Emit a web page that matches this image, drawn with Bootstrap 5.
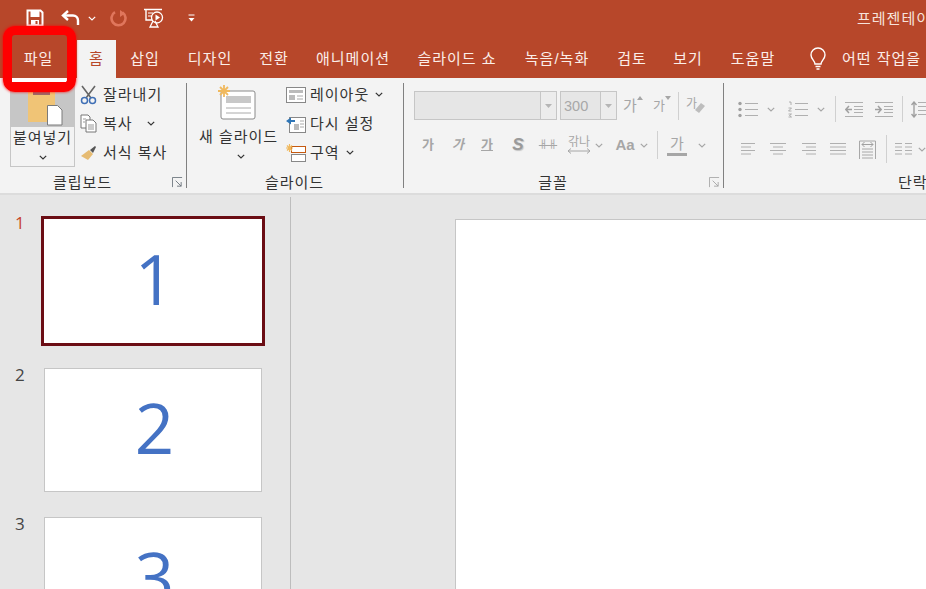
<!DOCTYPE html>
<html lang="ko">
<head>
  <meta charset="UTF-8">
  <meta name="viewport" content="width=device-width, initial-scale=1.0">
  <title>프레젠테이션 - PowerPoint</title>
  <link href="https://cdn.jsdelivr.net/npm/bootstrap@5.3.2/dist/css/bootstrap.min.css" rel="stylesheet">
  <script src="https://cdn.jsdelivr.net/npm/bootstrap@5.3.2/dist/js/bootstrap.bundle.min.js"></script>
  <style>
    html, body { height: 100%; }
    body {
      width: 926px; height: 589px; overflow: hidden; background: #e6e6e6;
      font-family: "Liberation Sans", "Noto Sans CJK KR", sans-serif;
      font-size: 15px; letter-spacing: 1px; line-height: 20px; color: #444;
    }
    svg { display: block; flex: none; }
    .titlebar { height: 40px; background: #b7472a; color: #fff; padding-bottom: 4px; }
    .qat { padding-left: 26px; }
    .doc-title { margin-left: auto; width: 69px; padding-top: 2px; white-space: nowrap; overflow: hidden; color: #f6e3dc; }
    .doc-title span { display: block; }
    .tabs { height: 38px; background: #b7472a; color: #fbeee9; white-space: nowrap; overflow: hidden; }
    .tab { height: 38px; line-height: 38px; text-align: center; flex: none; }
    .tab.active { background: #f3f3f3; color: #b7472a; }
    .tell { color: #fbeee9; }

    .ribbon { height: 117px; background: #f3f3f3; border-bottom: 2px solid #dcdcdc; overflow: hidden; }
    .grp { height: 115px; flex: none; position: relative; }
    .grp + .grp::before { content: ""; position: absolute; left: 0; top: 5px; height: 105px; width: 1px; background: #808080; }
    .grp-body { height: 95px; }
    .grp-label { height: 20px; text-align: center; color: #333; white-space: nowrap; }
    .launcher { position: absolute; bottom: 5px; }
    .g-clip { width: 186px; }
    .g-slide { width: 217px; }
    .g-font { width: 320px; }
    .g-para { width: 203px; }

    .paste { width: 65px; margin: 4px 0 0 10px; height: 85px; }
    .paste-top { height: 45px; background: #c6c6c6; overflow: hidden; }
    .paste-bot { height: 40px; border: 1px solid #c6c6c6; border-top: 0; text-align: center; color: #333; line-height: 20px; padding-top: 1px; white-space: nowrap; }
    .rows { padding-top: 2px; }
    .row-item { height: 29px; color: #333; white-space: nowrap; }
    .new-slide { width: 84px; margin-left: 9px; color: #333; white-space: nowrap; }

    .combo { height: 29px; border: 1px solid #c6c6c6; background: #e6e6e6; color: #a8a8a8; letter-spacing: 0; }
    .combo-arrow { width: 16px; height: 27px; background: #ececec; border-left: 1px solid #c6c6c6; margin-left: auto; }
    .off { color: #a6a6a6; font-weight: 700; font-size: 13px; letter-spacing: 0; }
    .off-sep { width: 1px; height: 28px; background: #d0d0d0; flex: none; }
    .tool { flex: none; text-align: center; }

    .panel { width: 291px; border-right: 1px solid #bdbdbd; margin-top: 2px; flex: none; }
    .slide-no { width: 41px; padding-left: 15px; flex: none; font: 17px/20px "Open Sans", sans-serif; letter-spacing: 0; margin-top: -3px; height: 20px; }
    .thumb {
      background: #fff; border: 1px solid #c6c6c6; color: #4472c4;
      font-family: "Open Sans", "Noto Sans", sans-serif; font-weight: 400; font-size: 69px; line-height: 1; letter-spacing: 0;
      width: 218px; height: 124px; margin-left: 3px; flex: none; padding: 0 0 5px 3px;
    }
    .thumb.sel { width: 224px; height: 130px; margin-left: 0; border: 3px solid #6b0d14; }
    .stage { background: #fff; border: 1px solid #c6c6c6; border-right: 0; border-bottom: 0; margin: 24px 0 0 164px; }
    .workspace { height: 394px; overflow: hidden; }

    .callout {
      position: absolute; left: 3px; top: 26px; width: 73px; height: 66px;
      border: 9.5px solid #fe0000; border-bottom-width: 10.5px; border-radius: 12px; box-shadow: 0 0 3px #fe0000;
    }
    .file-line { position: absolute; left: 12px; top: 78px; width: 54px; height: 4px; background: #fff; }
  </style>
</head>
<body class="position-relative">

  <svg width="0" height="0" class="position-absolute">
    <symbol id="chev" viewBox="0 0 8 5"><path d="M.8.8 4 4 7.200.8" fill="none" stroke="currentColor" stroke-width="1.200"/></symbol>
    <symbol id="launch" viewBox="0 0 12 12"><path d="M.5 11V.5H11M4 4l6 6M10 5.500V10H5.500" fill="none" stroke="currentColor"/></symbol>
  </svg>

  <!-- 제목 표시줄 -->
  <div class="titlebar d-flex align-items-center">
    <div class="qat d-flex align-items-center">
      <svg width="18" height="18" viewBox="0 0 18 18"><path d="M1.500 1.500h13l2 2v13h-15z" fill="none" stroke="#fff" stroke-width="2"/><rect x="4.500" y="2" width="9" height="6" fill="#fff"/><rect x="5" y="11" width="8" height="5" fill="#fff"/><rect x="9.500" y="12" width="2" height="3" fill="#b7472a"/></svg>
      <svg width="19" height="16" viewBox="0 0 19 16" style="margin-left:17px"><path d="M7 1 2 5.500 7 10" fill="none" stroke="#fff" stroke-width="2.400"/><path d="M3 5.500h9a5 5 0 0 1 5 5V15" fill="none" stroke="#fff" stroke-width="2.400"/></svg>
      <svg width="8" height="5" class="text-white" style="margin-left:8px"><use href="#chev"/></svg>
      <svg width="18" height="18" viewBox="0 0 18 18" style="margin-left:14px"><path d="M12.500 3.500A7 7 0 1 1 5 3.200" fill="none" stroke="#e0765c" stroke-width="2.600"/><path d="M10 1v7l5-3.500z" fill="#e0765c"/></svg>
      <svg width="20" height="20" viewBox="0 0 20 20" style="margin-left:16px"><path d="M0 1.500h18M2 1.500V12h6" fill="none" stroke="#fff" stroke-width="1.400"/><circle cx="13" cy="9.500" r="5.500" fill="none" stroke="#fff" stroke-width="1.300"/><path d="M11.500 6.500 16 9.500 11.500 12.500z" fill="#fff"/><path d="M4 5h5M4 8h4" stroke="#fff"/><path d="m9 13-3 6h8l-3-6" fill="none" stroke="#fff" stroke-width="1.300"/></svg>
      <svg width="7" height="8" viewBox="0 0 7 8" style="margin-left:24px"><path d="M.5 1h6" stroke="#fff"/><path d="M.5 4h6L3.500 7.500z" fill="#fff"/></svg>
    </div>
    <div class="doc-title"><span>프레젠테이션</span></div>
  </div>

  <!-- 탭 -->
  <div class="tabs d-flex">
    <div class="tab" style="width:77px">파일</div>
    <div class="tab active" style="width:39px">홈</div>
    <div class="tab" style="width:58px">삽입</div>
    <div class="tab" style="width:72px">디자인</div>
    <div class="tab" style="width:56px">전환</div>
    <div class="tab" style="width:102px">애니메이션</div>
    <div class="tab" style="width:106px">슬라이드 쇼</div>
    <div class="tab" style="width:94px">녹음/녹화</div>
    <div class="tab" style="width:56px">검토</div>
    <div class="tab" style="width:56px">보기</div>
    <div class="tab" style="width:74px">도움말</div>
    <div class="d-flex align-items-center tell" style="margin-left:20px">
      <svg width="16" height="24" viewBox="0 0 16 24"><path d="M5 17c0-3-4-5-4-9a7 7 0 0 1 14 0c0 4-4 6-4 9z" fill="none" stroke="#fff" stroke-width="1.400"/><path d="M5.500 19.500h5M6.500 22h3" stroke="#fff" stroke-width="1.500"/></svg>
      <span style="margin-left:16px">어떤 작업을 원하시나요?</span>
    </div>
  </div>

  <!-- 리본 -->
  <div class="ribbon d-flex">
    <div class="grp g-clip">
      <div class="grp-body d-flex">
        <div class="paste">
          <div class="paste-top">
            <svg width="65" height="45" viewBox="0 0 65 45"><rect x="18" y="10" width="27" height="30" fill="#f0c476"/><rect x="23" y="8" width="17" height="5" fill="#9b6a6a"/><path d="M37.500 23.500h10l4.500 4.500v15H37.500z" fill="#fff" stroke="#7a7a7a"/></svg>
          </div>
          <div class="paste-bot">붙여넣기
            <svg width="8" height="5" class="mx-auto" style="margin-top:7px"><use href="#chev"/></svg>
          </div>
        </div>
        <div class="rows" style="margin-left:5px">
          <div class="row-item d-flex align-items-center" style="gap:6px">
            <svg width="17" height="20" viewBox="0 0 17 20"><path d="M2 1l9 12M15 1 6 13" stroke="#666" stroke-width="1.600"/><circle cx="4.500" cy="15.500" r="3" fill="none" stroke="#3f6fb5" stroke-width="1.500"/><circle cx="12.500" cy="15.500" r="3" fill="none" stroke="#3f6fb5" stroke-width="1.500"/></svg>
            <span>잘라내기</span>
          </div>
          <div class="row-item d-flex align-items-center" style="gap:6px">
            <svg width="17" height="19" viewBox="0 0 17 19"><path d="M1 1h7l2 2v11H1z" fill="#fff" stroke="#777"/><path d="M6 6h7l3 3v9H6z" fill="#fff" stroke="#777"/><path d="M8 11h6M8 13h6M8 15h6M3 5h3M3 8h2" stroke="#999"/></svg>
            <span>복사</span>
            <svg width="8" height="5" style="margin-left:8px"><use href="#chev"/></svg>
          </div>
          <div class="row-item d-flex align-items-center" style="gap:6px">
            <svg width="17" height="16" viewBox="0 0 17 16"><path d="M1 11 9 5l4 4-5 6z" fill="#e6bb72"/><path d="m10 5 5-4 1 1-3 6z" fill="#555"/></svg>
            <span>서식 복사</span>
          </div>
        </div>
      </div>
      <div class="grp-label" style="padding-right:21px">클립보드</div>
      <svg class="launcher text-secondary" width="11" height="11" style="left:172px"><use href="#launch"/></svg>
    </div>

    <div class="grp g-slide">
      <div class="grp-body d-flex">
        <div class="new-slide">
          <svg width="38" height="36" viewBox="0 0 38 36" style="margin:7px 0 0 23px">
            <rect x="3" y="6" width="34" height="28" rx="2" fill="#fff" stroke="#8a8a8a"/>
            <rect x="8" y="11" width="25" height="7" fill="#c8c8c8"/>
            <path d="M8 23h25M8 28h25" stroke="#aaa"/>
            <path d="M6 0v12M0 6h12M2 2l8 8M10 2l-8 8" stroke="#f0b95e" stroke-width="1.800"/>
          </svg>
          <div style="margin:6px 0 0 4px">새 슬라이드</div>
          <svg width="8" height="5" style="margin:7px 0 0 42px"><use href="#chev"/></svg>
        </div>
        <div class="rows" style="margin-left:7px">
          <div class="row-item d-flex align-items-center">
            <svg width="20" height="16" viewBox="0 0 20 16"><rect x=".5" y=".5" width="19" height="15" fill="#fff" stroke="#888"/><rect x="3" y="3" width="14" height="3" fill="#bbb"/><rect x="3" y="8" width="6" height="5" fill="#bbb"/><path d="M11 9h6M11 12h6" stroke="#aaa"/></svg>
            <span style="margin-left:4px">레이아웃</span>
            <svg width="8" height="5" style="margin-left:6px"><use href="#chev"/></svg>
          </div>
          <div class="row-item d-flex align-items-center">
            <svg width="20" height="18" viewBox="0 0 20 18"><rect x="3.500" y="2.500" width="16" height="15" fill="#fff" stroke="#888"/><rect x="8" y="9" width="5" height="6" fill="#bbb"/><path d="M14 6h4M14 9h4M14 12h4" stroke="#aaa"/><path d="M9 5H5V2.500L0 6l5 3.500V7h4z" fill="#2e75b6"/></svg>
            <span style="margin-left:4px">다시 설정</span>
          </div>
          <div class="row-item d-flex align-items-center">
            <svg width="20" height="18" viewBox="0 0 20 18"><rect x="5.500" y="2.500" width="14" height="6" fill="#fff" stroke="#c55a11"/><rect x="5.500" y="10.500" width="14" height="7" fill="#fff" stroke="#888"/><path d="M3.500 0v8M0 4h7M1 1.500l5 5M6 1.500l-5 5" stroke="#f0b95e" stroke-width="1.200"/></svg>
            <span style="margin-left:4px">구역</span>
            <svg width="8" height="5" style="margin-left:6px"><use href="#chev"/></svg>
          </div>
        </div>
      </div>
      <div class="grp-label">슬라이드</div>
    </div>

    <div class="grp g-font">
      <div class="grp-body">
        <div class="d-flex align-items-center off" style="padding:13px 0 0 11px;font-weight:400">
          <div class="combo d-flex" style="width:143px"><div class="combo-arrow d-flex align-items-center justify-content-center"><svg width="7" height="4" viewBox="0 0 7 4"><path d="M0 0h7L3.500 4z" fill="#b5b5b5"/></svg></div></div>
          <div class="combo d-flex align-items-center" style="width:57px;margin-left:3px;padding-left:3px;font-size:14.5px">300<div class="combo-arrow d-flex align-items-center justify-content-center"><svg width="7" height="4" viewBox="0 0 7 4"><path d="M0 0h7L3.500 4z" fill="#b5b5b5"/></svg></div></div>
          <div class="tool d-flex align-items-start" style="width:20px;margin-left:6px;font-size:15px">가<svg width="6" height="4" viewBox="0 0 6 4"><path d="M0 4 3 0l3 4z" fill="#a6a6a6"/></svg></div>
          <div class="tool d-flex align-items-start" style="width:18px;margin-left:10px;font-size:13px">가<svg width="6" height="4" viewBox="0 0 6 4"><path d="M0 0h6L3 4z" fill="#a6a6a6"/></svg></div>
          <div class="off-sep" style="margin-left:7px"></div>
          <div class="tool d-flex" style="width:22px;margin-left:7px;font-size:12px;line-height:14px">가<svg width="12" height="12" viewBox="0 0 12 12" style="margin:5px 0 0 -3px"><path d="m1 8 6-7 4 3-6 7z" fill="#bdbdbd"/></svg></div>
        </div>
        <div class="d-flex align-items-center off" style="padding:11px 0 0 17px">
          <div class="tool" style="width:16px">가</div>
          <div class="tool fst-italic" style="width:16px;margin-left:14px">가</div>
          <div class="tool text-decoration-underline" style="width:16px;margin-left:13px">가</div>
          <div class="tool fst-italic" style="width:18px;margin-left:14px;font-size:17px;color:#9a9a9a;text-shadow:1px 1px 1px #c4c4c4">S</div>
          <div class="tool text-decoration-line-through fw-normal" style="width:22px;margin-left:10px;font-size:10px">ㅐㅐ</div>
          <div class="tool fw-normal" style="width:24px;margin-left:8px;font-size:12px;line-height:12px">갂나<svg width="24" height="6" viewBox="0 0 24 6"><path d="M1 3h22M4 .5 1 3l3 2.500M20 .5 23 3l-3 2.500" fill="none" stroke="#a6a6a6"/></svg></div>
          <svg width="8" height="5" style="margin-left:4px"><use href="#chev"/></svg>
          <div class="tool" style="width:22px;margin-left:11px;font-size:15px">Aa</div>
          <svg width="8" height="5" style="margin-left:4px"><use href="#chev"/></svg>
          <div class="off-sep" style="margin-left:9px"></div>
          <div class="tool fw-normal" style="width:20px;margin-left:9px;border-bottom:3px solid #a6a6a6;font-size:15px;line-height:18px">가</div>
          <svg width="8" height="5" style="margin-left:11px"><use href="#chev"/></svg>
        </div>
      </div>
      <div class="grp-label" style="padding-right:20px">글꼴</div>
      <svg class="launcher" width="11" height="11" style="left:306px;color:#a6a6a6"><use href="#launch"/></svg>
    </div>

    <div class="grp g-para" style="color:#a6a6a6">
      <div class="grp-body">
        <div class="d-flex align-items-center" style="padding:18px 0 0 15px">
          <svg width="20" height="17" viewBox="0 0 20 17"><path d="M7 2.500h13M7 8.500h13M7 14.500h13" stroke="#b0b0b0"/><circle cx="2" cy="2.500" r="1.700" fill="#a0a0a0"/><circle cx="2" cy="8.500" r="1.700" fill="#a0a0a0"/><circle cx="2" cy="14.500" r="1.700" fill="#a0a0a0"/></svg>
          <svg width="8" height="5" style="margin-left:9px"><use href="#chev"/></svg>
          <svg width="20" height="17" viewBox="0 0 20 17" style="margin-left:13px"><path d="M7 2.500h13M7 8.500h13M7 14.500h13" stroke="#b0b0b0"/><path d="M1 1h2v3M.5 7h3l-3 3h3M.5 13h3l-2 1.500 2 1.500h-3" fill="none" stroke="#a0a0a0" stroke-width=".8"/></svg>
          <svg width="8" height="5" style="margin-left:9px"><use href="#chev"/></svg>
          <div class="off-sep" style="margin-left:10px;height:26px"></div>
          <svg width="18" height="15" viewBox="0 0 18 15" style="margin-left:9px"><path d="M0 .5h18M0 14.500h18M9 4.500h9M9 7.500h9M9 10.500h9" stroke="#b0b0b0"/><path d="M7 7.500H1M4 4 .8 7.500 4 11" fill="none" stroke="#a0a0a0" stroke-width="1.500"/></svg>
          <svg width="18" height="15" viewBox="0 0 18 15" style="margin-left:12px"><path d="M0 .5h18M0 14.500h18M9 4.500h9M9 7.500h9M9 10.500h9" stroke="#b0b0b0"/><path d="M0 7.500h6M3 4l3.200 3.500L3 11" fill="none" stroke="#a0a0a0" stroke-width="1.500"/></svg>
          <div class="off-sep" style="margin-left:9px;height:26px"></div>
          <svg width="18" height="17" viewBox="0 0 18 17" style="margin-left:8px"><path d="M7 1.500h11M7 5.500h11M7 9.500h11M7 13.500h11" stroke="#b0b0b0"/><path d="M3 1v15M.5 4 3 1l2.500 3M.5 13 3 16l2.500-3" fill="none" stroke="#a0a0a0" stroke-width="1.400"/></svg>
        </div>
        <div class="d-flex align-items-center" style="padding:13px 0 0 18px">
          <svg width="14" height="12" viewBox="0 0 14 12"><path d="M0 .5h14M0 4h10M0 7.500h14M0 11h10" stroke="#b0b0b0"/></svg>
          <svg width="16" height="12" viewBox="0 0 16 12" style="margin-left:15px"><path d="M0 .5h16M3 4h10M0 7.500h16M3 11h10" stroke="#b0b0b0"/></svg>
          <svg width="14" height="12" viewBox="0 0 14 12" style="margin-left:16px"><path d="M0 .5h14M4 4h10M0 7.500h14M4 11h10" stroke="#b0b0b0"/></svg>
          <svg width="16" height="12" viewBox="0 0 16 12" style="margin-left:14px"><path d="M0 .5h16M0 4h16M0 7.500h16M0 11h16" stroke="#b0b0b0"/></svg>
          <svg width="17" height="19" viewBox="0 0 17 19" style="margin-left:13px"><path d="M.5 19V1h16v18M3 9h11M3 12h11M3 15h11M3 18h11" fill="none" stroke="#a8a8a8"/><path d="M3 4.500h11M5.500 2 3 4.500 5.500 7M11.500 2 14 4.500 11.500 7" fill="none" stroke="#a0a0a0"/></svg>
          <div class="off-sep" style="margin-left:10px"></div>
          <svg width="17" height="12" viewBox="0 0 17 12" style="margin-left:8px"><path d="M0 .5h7M0 4h7M0 7.500h7M0 11h7M10 .5h7M10 4h7M10 7.500h7M10 11h7" stroke="#b0b0b0"/></svg>
          <svg width="8" height="5" style="margin-left:6px"><use href="#chev"/></svg>
        </div>
      </div>
      <div class="grp-label text-start" style="padding-left:175px">단락</div>
    </div>
  </div>

  <!-- 슬라이드 영역 -->
  <div class="workspace d-flex">
    <div class="panel d-flex flex-column" style="padding-top:19px">
      <div class="d-flex">
        <div class="slide-no" style="color:#c8452c">1</div>
        <div class="thumb sel d-flex align-items-center justify-content-center">1</div>
      </div>
      <div class="d-flex" style="margin-top:22px">
        <div class="slide-no">2</div>
        <div class="thumb d-flex align-items-center justify-content-center">2</div>
      </div>
      <div class="d-flex" style="margin-top:25px">
        <div class="slide-no">3</div>
        <div class="thumb d-flex align-items-center justify-content-center">3</div>
      </div>
    </div>
    <div class="stage flex-grow-1"></div>
  </div>

  <!-- 빨간 강조 표시 -->
  <div class="callout"></div>
  <div class="file-line"></div>
</body>
</html>
